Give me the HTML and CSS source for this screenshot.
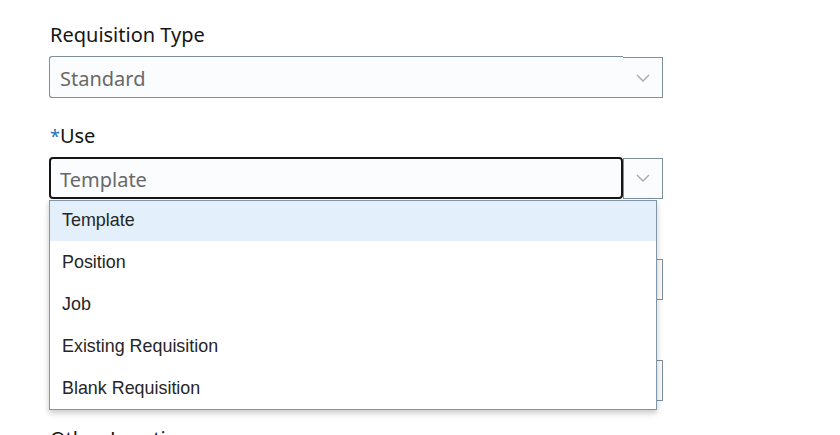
FILE: index.html
```html
<!DOCTYPE html>
<html lang="en">
<head>
<meta charset="utf-8">
<title>Requisition</title>
<link rel="stylesheet" href="styles.css">
</head>
<body>
<div class="form">
  <div class="group">
    <div class="label">Requisition Type</div>
    <div class="combo combo-readonly">
      <div class="input">Standard</div>
      <div class="btn"><svg width="14" height="8" viewBox="0 0 14 8"><path d="M1 1 L7 7 L13 1" fill="none" stroke="#a9a9a9" stroke-width="1.4"/></svg></div>
    </div>
  </div>
  <div class="group">
    <div class="label"><span class="req">*</span>Use</div>
    <div class="combo">
      <div class="input focused">Template</div>
      <div class="btn"><svg width="14" height="8" viewBox="0 0 14 8"><path d="M1 1 L7 7 L13 1" fill="none" stroke="#a9a9a9" stroke-width="1.4"/></svg></div>
      <ul class="menu">
        <li class="item active">Template</li>
        <li class="item">Position</li>
        <li class="item">Job</li>
        <li class="item">Existing Requisition</li>
        <li class="item">Blank Requisition</li>
      </ul>
    </div>
  </div>
  <div class="group">
    <div class="label">Template</div>
    <div class="combo">
      <div class="input"></div>
      <div class="btn"><svg width="14" height="8" viewBox="0 0 14 8"><path d="M1 1 L7 7 L13 1" fill="none" stroke="#a9a9a9" stroke-width="1.4"/></svg></div>
    </div>
  </div>
  <div class="group">
    <div class="label">Primary Location</div>
    <div class="combo">
      <div class="input"></div>
      <div class="btn"><svg width="14" height="8" viewBox="0 0 14 8"><path d="M1 1 L7 7 L13 1" fill="none" stroke="#a9a9a9" stroke-width="1.4"/></svg></div>
    </div>
  </div>
  <div class="group">
    <div class="label">Other Locations</div>
  </div>
</div>
</body>
</html>
```

FILE: styles.css
```css
html, body {
  margin: 0;
  padding: 0;
  background: #ffffff;
  overflow: hidden;
}
.form {
  padding: 23px 0 0 49px;
  font-family: "Noto Sans", "Open Sans", sans-serif;
  color: #161513;
}
.group {
  margin-bottom: 26px;
}
.label {
  font-size: 20px;
  line-height: 24px;
  margin-bottom: 9px;
  padding-left: 1px;
}
.req {
  color: #1d6fc0;
  font-size: 18px;
}
.combo {
  position: relative;
  display: flex;
  align-items: center;
  width: 614px;
  height: 42px;
}
.input {
  box-sizing: border-box;
  width: 574px;
  height: 42px;
  border: 1px solid #7d8f9b;
  border-right: none;
  border-radius: 3px 0 0 3px;
  background: #fbfcfe;
  padding-left: 10px;
  font-size: 20px;
  line-height: 44px;
  color: #686868;
  overflow: hidden;
}
.input.focused {
  border: 2px solid #161513;
  border-radius: 4px;
  padding-left: 9px;
  line-height: 42px;
}
.btn {
  box-sizing: border-box;
  width: 40px;
  height: 41px;
  border: 1px solid #7d8f9b;
  background: #fbfcfe;
  display: flex;
  align-items: center;
  justify-content: center;
}
.combo-readonly {
  align-items: flex-end;
}
.combo-readonly .btn {
  border-left: none;
  padding-right: 0;
}
.menu {
  position: absolute;
  top: 43px;
  left: 0;
  box-sizing: border-box;
  width: 608px;
  margin: 0;
  padding: 0;
  list-style: none;
  background: #ffffff;
  border: 1px solid #8196a6;
  box-shadow: 0 3px 6px rgba(0, 0, 0, 0.22);
  font-family: "Liberation Sans", Arial, sans-serif;
  font-size: 17.9px;
  color: #262626;
  z-index: 2;
}
.item {
  height: 42px;
  line-height: 42px;
  padding-left: 12px;
}
.item.active {
  height: 40px;
  line-height: 39px;
  background: #e3f0fc;
}
```
